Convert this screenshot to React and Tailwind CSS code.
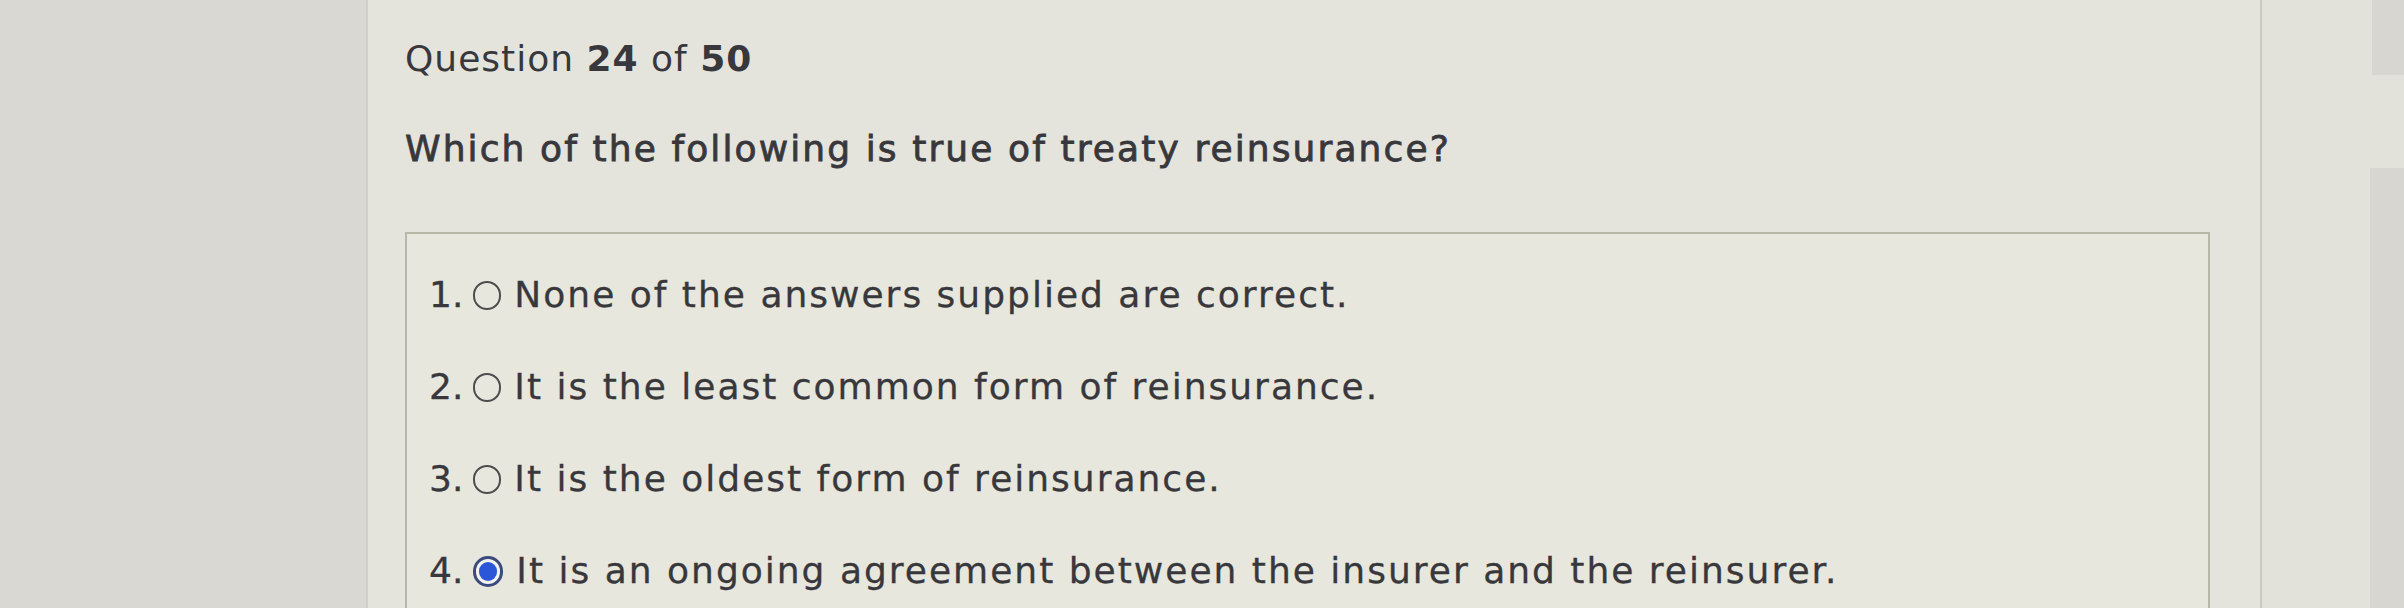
import React from 'react';

const options = [
  { n: '1.', text: 'None of the answers supplied are correct.' },
  { n: '2.', text: 'It is the least common form of reinsurance.' },
  { n: '3.', text: 'It is the oldest form of reinsurance.' },
  { n: '4.', text: 'It is an ongoing agreement between the insurer and the reinsurer.', selected: true },
];

function Radio({ selected }) {
  if (selected) {
    return (
      <span className="flex h-[31px] w-[30px] shrink-0 items-center justify-center rounded-full border-[3px] border-[#3b4a7c] bg-[#f2f3f0]">
        <span className="h-[19px] w-[18px] rounded-full bg-[#2c56d8]" />
      </span>
    );
  }
  return <span className="h-[29px] w-[28px] shrink-0 rounded-full border-2 border-[#4d4d50]" />;
}

export default function App() {
  return (
    <div
      className="flex h-[608px] w-[2404px] overflow-hidden text-[#38383c]"
      style={{ fontFamily: '"DejaVu Sans", Inter, sans-serif' }}
    >
      <div className="w-[368px] shrink-0 border-r-2 border-[#cfcfc7] bg-[#d9d8d2]" />

      <div className="flex w-[1894px] shrink-0 flex-col border-r-2 border-[#c8c9bf] bg-[#e4e3dc] pl-[37px]">
        <h1 className="mt-[36px] text-[36px] leading-[46px] tracking-[1px]">
          Question <span className="font-bold">24</span> of <span className="font-bold">50</span>
        </h1>
        <h2 className="mt-[44px] text-[36px] leading-[46px] tracking-[2.1px] [-webkit-text-stroke:0.8px_#38383c]">
          Which of the following is true of treaty reinsurance?
        </h2>

        <div className="mt-[60px] mr-[50px] flex flex-1 flex-col gap-[54px] border-2 border-b-0 border-[#b6b7a7] bg-[#e7e7dd] pl-[22px] pt-[42px]">
          {options.map((o) => (
            <div
              key={o.n}
              className="flex items-center text-[36px] leading-[38px] tracking-[2px] [-webkit-text-stroke:0.3px_#38383c]"
            >
              <span className="tracking-normal">{o.n}</span>
              <span className="ml-[10px] flex items-center">
                <Radio selected={o.selected} />
              </span>
              <span className="ml-[13px]">{o.text}</span>
            </div>
          ))}
        </div>
      </div>

      <div className="flex flex-1 flex-col items-end bg-[#e2e1da]">
        <div className="h-[75px] w-[32px] bg-[#d7d6d0]" />
        <div className="mt-[93px] w-[34px] flex-1 bg-[#d7d6d0]" />
      </div>
    </div>
  );
}
